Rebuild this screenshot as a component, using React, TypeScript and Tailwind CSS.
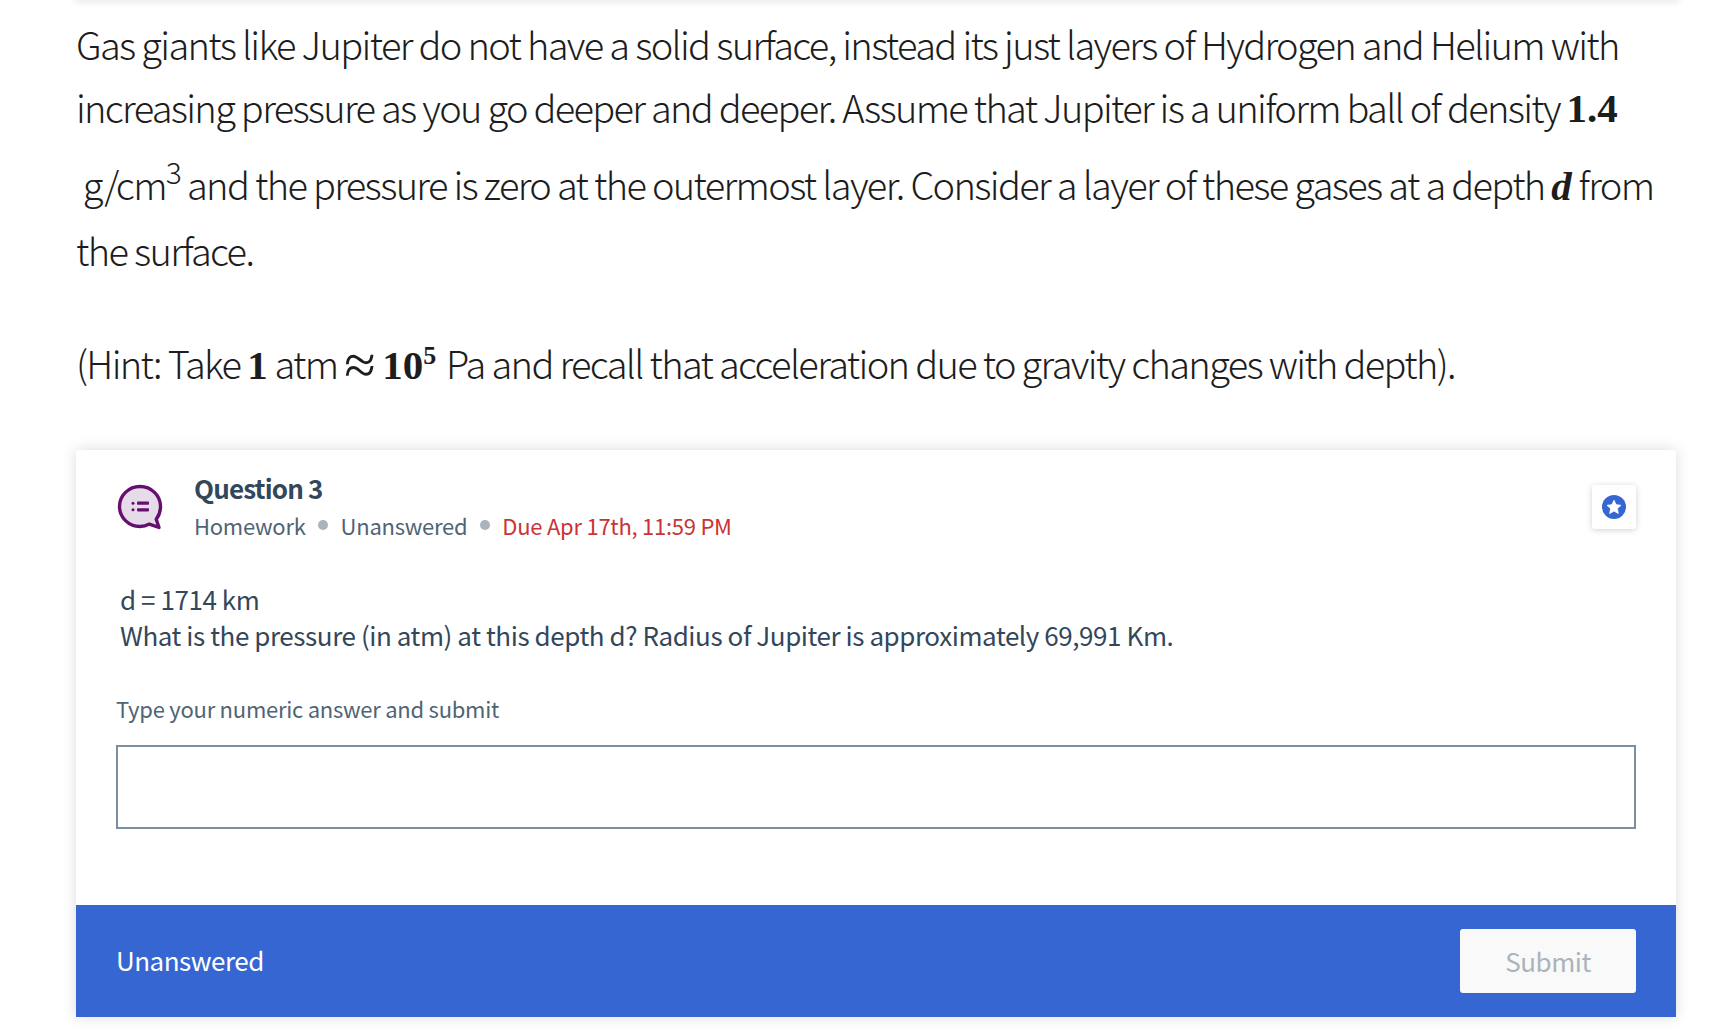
const body = "font-['Noto_Sans_CJK_SC','Source_Sans_Pro',sans-serif]";
const math = "font-['Liberation_Serif',serif] font-bold text-[41px] tracking-normal text-[#1d1d1d]";

function BubbleIcon() {
  return (
    <svg width="46" height="46" viewBox="0 0 46 46" className="shrink-0">
      <path
        d="M23 2.500C11.600 2.500 2.500 11.600 2.500 22.500S11.600 42.500 23 42.500c3.600 0 6.600-.9 9.400-2.400l9.600 3.400-2.800-8.200c2.600-3.400 4.300-8 4.300-12.800C43.500 11.600 34.400 2.500 23 2.500z"
        fill="#e6dbe9"
        stroke="#660f6e"
        strokeWidth="3.400"
        strokeLinejoin="round"
      />
      <circle cx="16" cy="19.200" r="1.500" fill="#660f6e" />
      <circle cx="16" cy="25.800" r="1.500" fill="#660f6e" />
      <rect x="20" y="17.600" width="12" height="3.200" rx="0.800" fill="#660f6e" />
      <rect x="20" y="24.200" width="12" height="3.200" rx="0.800" fill="#660f6e" />
    </svg>
  );
}

function StarBadge() {
  return (
    <svg width="24" height="24" viewBox="0 0 24 24">
      <circle cx="12" cy="12" r="12" fill="#3566d1" />
      <path
        d="M12 5.200l2.100 4.500 4.900.6-3.600 3.300.9 4.900-4.300-2.400-4.300 2.400.9-4.900L5 10.300l4.900-.6z"
        fill="#fff"
        stroke="#fff"
        strokeWidth="0.800"
        strokeLinejoin="round"
      />
    </svg>
  );
}

function Dot() {
  return <span className="mx-[12.5px] h-[10px] w-[10px] rounded-full bg-[#a8b3bd]" />;
}

export default function App() {
  return (
    <div className={`${body} h-[1032px] w-[1710px] overflow-hidden bg-white`}>
      {/* edge of the previous card */}
      <div className="ml-[76px] h-0 w-[1601px] shadow-[0_0_6px_2px_rgba(0,0,0,0.12)]" />

      {/* question text */}
      <div className="ml-[76px] w-[1600px] pt-[12px] text-[38px] font-light tracking-[-1.66px] whitespace-nowrap text-[#1d1d1d]">
        <div className="h-[63px] leading-[63px]">
          Gas giants like Jupiter do not have a solid surface, instead its just layers of Hydrogen and Helium with
        </div>
        <div className="h-[63px] leading-[63px] tracking-[-1.7px]">
          increasing pressure as you go deeper and deeper. Assume that Jupiter is a uniform ball of density{" "}
          <span className={`${math} relative -top-[1px]`}>1.4</span>
        </div>
        <div className="h-[77px] pt-[14px] leading-[63px]">
          &nbsp;g/cm<sup className="relative -top-[16px] align-baseline text-[30px]">3</sup> and the pressure is zero at the outermost layer. Consider a layer of these gases at a depth{" "}
          <span className={`${math} italic`}>d</span> from
        </div>
        <div className="h-[66px] pt-[3px] leading-[63px]">the surface.</div>
        <div className="mt-[50px] h-[63px] leading-[63px]">
          (Hint: Take <span className={math}>1</span> atm{" "}
          <span className="relative top-[5px] font-['Liberation_Serif',serif] text-[57px] leading-[0] font-normal tracking-normal">≈</span>{" "}
          <span className={math}>
            10<sup className="relative -top-[15px] align-baseline text-[26px]">5</sup>
          </span>{" "}
          <span className="ml-[3px]">Pa and recall that acceleration due to gravity changes with depth).</span>
        </div>
      </div>

      {/* question card */}
      <div className="mt-[56px] ml-[76px] w-[1600px] bg-white shadow-[0_0_14px_rgba(0,0,0,0.14)]">
        <div className="relative h-[455px] pt-[20px] pr-[41px] pl-[41px]">
          <div className="flex">
            <div className="pt-[14px]">
              <BubbleIcon />
            </div>
            <div className="ml-[31px]">
              <div className="text-[26px] leading-[36px] font-bold tracking-[-0.85px] text-[#33475b]">Question 3</div>
              <div className="mt-[3px] flex items-center text-[22px] leading-[32px] tracking-[-0.25px] text-[#4f6475]">
                <span>Homework</span>
                <Dot />
                <span>Unanswered</span>
                <Dot />
                <span className="text-[#c93434]">Due Apr 17th, 11:59 PM</span>
              </div>
            </div>
          </div>

          <div className="absolute top-[35px] right-[40px] flex h-[44px] w-[44px] items-center justify-center rounded-[3px] bg-white shadow-[0_1px_6px_rgba(0,0,0,0.18)]">
            <StarBadge />
          </div>

          <div className="mt-[40px] ml-[3px] text-[26px] leading-[36px] tracking-[-0.43px] text-[#33475b]">
            <div>d = 1714 km</div>
            <div>What is the pressure (in atm) at this depth d? Radius of Jupiter is approximately 69,991 Km.</div>
          </div>

          <div className="mt-[39px] -ml-[1px] text-[22px] leading-[32px] tracking-[-0.25px] text-[#4f6475]">Type your numeric answer and submit</div>
          <input className="mt-[21px] -ml-[1px] block h-[84px] w-[1520px] border-2 border-[#7d8f9f] bg-white" />
        </div>

        <div className="flex h-[112px] items-center justify-between bg-[#3566d1] pr-[40px] pl-[40px]">
          <span className="pb-[3px] text-[26px] tracking-[-0.5px] text-white">Unanswered</span>
          <button className="h-[64px] w-[176px] rounded-[3px] bg-[#f9f9f9] pb-[1px] text-[26px] tracking-[-0.5px] text-[#a9b4bc]">Submit</button>
        </div>
      </div>
    </div>
  );
}
